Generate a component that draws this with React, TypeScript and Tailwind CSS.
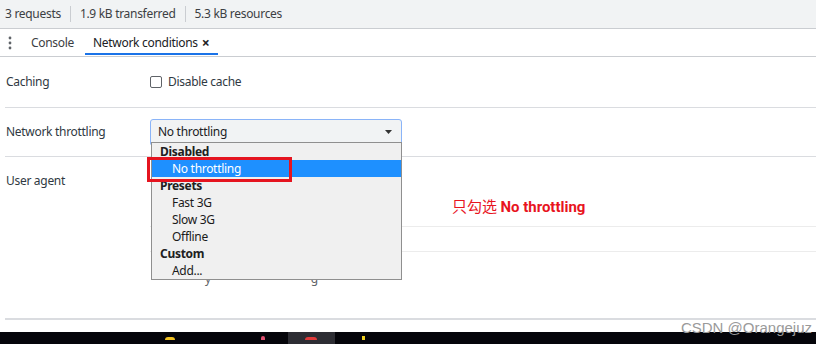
import React from "react";

const font = { fontFamily: '"Noto Sans", "Segoe UI", sans-serif', letterSpacing: "-0.3px" };

function Dropdown() {
  const items: { label: string; header?: boolean; active?: boolean }[] = [
    { label: "Disabled", header: true },
    { label: "No throttling", active: true },
    { label: "Presets", header: true },
    { label: "Fast 3G" },
    { label: "Slow 3G" },
    { label: "Offline" },
    { label: "Custom", header: true },
    { label: "Add..." },
  ];
  return (
    <div className="absolute left-[151px] top-[142px] w-[251px] border border-[#8f8f8f] bg-[#f0f0f0] text-[12px] text-[#1a1a1a]">
      {items.map((it) => (
        <div
          key={it.label}
          className={
            "flex h-[17px] items-center leading-none " +
            (it.header ? "pl-[8px] font-bold text-[#202020] " : "pl-[20px] ") +
            (it.active ? "bg-[#1e90ff] text-white" : "")
          }
        >
          {it.label}
        </div>
      ))}
    </div>
  );
}

export default function App() {
  return (
    <div className="relative h-[344px] w-[816px] overflow-hidden bg-white text-[12px] text-[#303942]" style={font}>
      {/* summary bar */}
      <div className="flex h-[29px] items-center border-b border-[#cacdd1] bg-[#f1f3f4] pl-[5px] text-[#3c4043]">
        <span>3 requests</span>
        <span className="mx-[9px] h-[16px] w-px bg-[#cacdd1]" />
        <span>1.9 kB transferred</span>
        <span className="mx-[9px] h-[16px] w-px bg-[#cacdd1]" />
        <span>5.3 kB resources</span>
      </div>

      {/* drawer tabs */}
      <div className="flex h-[28px] items-stretch border-b border-[#cacdd1] bg-white">
        <div className="flex w-[20px] items-center justify-center">
          <svg width="4" height="14" viewBox="0 0 4 14" fill="#5f6368">
            <circle cx="2" cy="2" r="1.4" />
            <circle cx="2" cy="7" r="1.4" />
            <circle cx="2" cy="12" r="1.4" />
          </svg>
        </div>
        <div className="flex items-center px-[11px] text-[#3c4043]">Console</div>
        <div className="relative flex items-center pl-[8px] pr-[8px] text-[#202124]">
          Network conditions
          <span className="ml-[4px] text-[14px] font-bold leading-none text-[#202124]">×</span>
          <span className="absolute bottom-[1px] left-0 right-0 h-[2px] bg-[#1a73e8]" />
        </div>
      </div>

      {/* caching */}
      <div className="ml-[5px] flex h-[51px] items-center border-b border-[#dadce0]">
        <div className="w-[145px] pl-[1px]">Caching</div>
        <label className="flex items-center gap-[6px]">
          <span className="h-[12px] w-[12px] rounded-[2px] border border-[#5f6368] bg-white" />
          Disable cache
        </label>
      </div>

      {/* throttling */}
      <div className="ml-[5px] flex h-[49px] items-center border-b border-[#dadce0]">
        <div className="w-[145px] pl-[1px]">Network throttling</div>
        <div className="flex h-[27px] w-[252px] items-center justify-between rounded-[3px] border border-[#8ab4f8] bg-[#f1f3f4] pl-[7px] pr-[9px] text-[#202124]">
          No throttling
          <svg width="7" height="4" viewBox="0 0 7 4" fill="#333">
            <path d="M0 0h7L3.5 4z" />
          </svg>
        </div>
      </div>

      {/* user agent */}
      <div className="ml-[5px] flex h-[163px] flex-col border-b-2 border-[#dadce0]">
        <div className="flex h-[48px] items-center pl-[1px]">User agent</div>
        <div className="ml-[145px] mt-[21px] border-b border-[#ececec]" />
        <div className="ml-[145px] mt-[24px] border-b border-[#ececec]" />
        <div className="ml-[200px] mt-[18px] flex gap-[100px] text-[#5f6368]">
          <span>y</span>
          <span>g</span>
        </div>
      </div>

      {/* taskbar strip */}
      <div className="relative mt-[12px] h-[12px] bg-[#05050a]">
        <span className="absolute left-[288px] top-0 h-full w-[47px] bg-[#2d2d33]" />
        <span className="absolute left-[165px] top-[5px] h-[3px] w-[10px] rounded-t-full bg-[#f0c020]" />
        <span className="absolute left-[261px] top-[4px] h-[4px] w-[4px] rounded-t-full bg-[#e05070]" />
        <span className="absolute left-[305px] top-[5px] h-[3px] w-[12px] rounded-t-full bg-[#e03a3a]" />
        <span className="absolute left-[362px] top-[4px] h-[4px] w-[3px] bg-[#f0d020]" />
      </div>

      <Dropdown />

      {/* annotation */}
      <div className="absolute left-[147px] top-[157px] h-[25px] w-[145px] border-[3px] border-[#e5141f]" />
      <div
        className="absolute left-[452px] top-[195px] text-[15px] tracking-normal text-[#e8141e]"
        style={{ fontFamily: '"Noto Sans CJK SC", sans-serif' }}
      >
        只勾选 <span className="font-bold" style={{ fontFamily: "Roboto, sans-serif" }}>No throttling</span>
      </div>

      <div
        className="absolute right-[4px] top-[317px] text-[15px] tracking-normal text-[#9a9a9a]"
        style={{ fontFamily: '"Liberation Sans", sans-serif' }}
      >
        CSDN @Orangejuz
      </div>
    </div>
  );
}
